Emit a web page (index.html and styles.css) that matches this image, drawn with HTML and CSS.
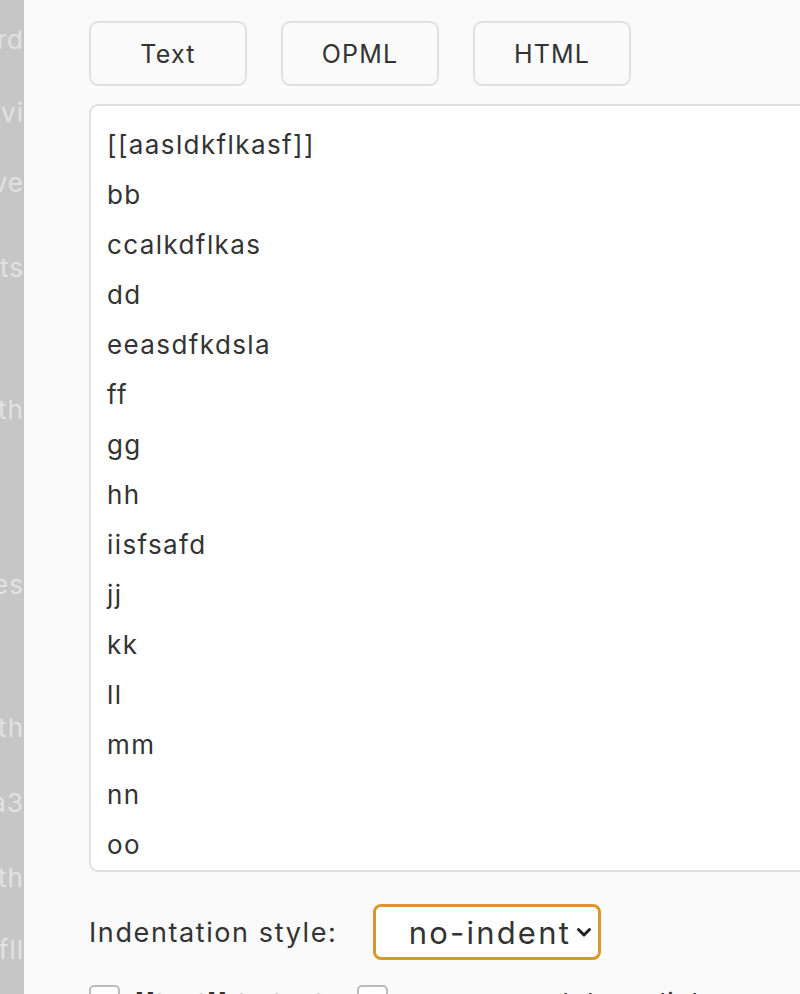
FILE: index.html
```html
<!DOCTYPE html>
<html>
<head>
<meta charset="utf-8">
<link rel="stylesheet" href="styles.css">
</head>
<body>
<div class="page">
  <aside class="sidebar">
    <div class="side-item s1">Dashboard</div>
    <div class="side-item s2">Overvi</div>
    <div class="side-item s3">Archive</div>
    <div class="side-item s4">Results</div>
    <div class="side-item s5">Month</div>
    <div class="side-item s6">Notes</div>
    <div class="side-item s7">12th</div>
    <div class="side-item s8">fa3</div>
    <div class="side-item s9">20th</div>
    <div class="side-item s10">asdfll</div>
  </aside>
  <main class="main">
    <div class="tabs">
      <button class="tab">Text</button>
      <button class="tab">OPML</button>
      <button class="tab">HTML</button>
    </div>
    <div class="output">
      <div class="line">[[aasldkflkasf]]</div>
      <div class="line">bb</div>
      <div class="line">ccalkdflkas</div>
      <div class="line">dd</div>
      <div class="line">eeasdfkdsla</div>
      <div class="line">ff</div>
      <div class="line">gg</div>
      <div class="line">hh</div>
      <div class="line">iisfsafd</div>
      <div class="line">jj</div>
      <div class="line">kk</div>
      <div class="line">ll</div>
      <div class="line">mm</div>
      <div class="line">nn</div>
      <div class="line">oo</div>
    </div>
    <div class="indent-row">
      <label class="indent-label">Indentation style:</label>
      <div class="select">
        <span class="select-value">no-indent</span>
        <svg class="chevron" width="16" height="12" viewBox="0 0 16 12"><path d="M2.5 3.5 L8 9 L13.5 3.5" fill="none" stroke="#222" stroke-width="3" stroke-linecap="round" stroke-linejoin="round"/></svg>
      </div>
    </div>
    <div class="options">
      <label class="option"><span class="checkbox"></span><span class="opt-text">[[text]] to text</span></label>
      <label class="option"><span class="checkbox"></span><span class="opt-text">remove markdown links</span></label>
    </div>
  </main>
</div>
</body>
</html>
```

FILE: styles.css
```css
html, body {
  margin: 0;
  padding: 0;
  height: 994px;
  overflow: hidden;
  background: #fafafa;
  font-family: Inter, "Noto Sans", sans-serif;
  color: #333;
}
.page {
  display: flex;
  height: 994px;
}
.sidebar {
  width: 24px;
  flex: none;
  background: #c6c6c6;
  overflow: hidden;
  display: flex;
  flex-direction: column;
  align-items: flex-end;
}
.side-item {
  color: #e2e2e2;
  font-size: 26px;
  line-height: 30px;
  white-space: nowrap;
  letter-spacing: 1px;
}
.s1 { margin-top: 25px; }
.s2 { margin-top: 43px; }
.s3 { margin-top: 40px; }
.s4 { margin-top: 55px; }
.s5 { margin-top: 112px; }
.s6 { margin-top: 145px; }
.s7 { margin-top: 113px; }
.s8 { margin-top: 45px; }
.s9 { margin-top: 45px; }
.s10 { margin-top: 42px; }
.main {
  flex: 1;
  padding: 21px 0 0 65px;
  min-width: 0;
}
.tabs {
  display: flex;
  gap: 34px;
}
.tab {
  width: 158px;
  height: 65px;
  border: 2px solid #e0e0e0;
  border-radius: 9px;
  background: #fafafa;
  font-family: Inter, "Noto Sans", sans-serif;
  font-size: 25px;
  letter-spacing: 1.2px;
  color: #333;
  padding: 0;
}
.output {
  margin-top: 18px;
  width: 760px;
  height: 768px;
  box-sizing: border-box;
  border: 2px solid #e0e0e0;
  border-radius: 9px;
  background: #fff;
  padding: 14px 16px;
}
.line {
  font-size: 26px;
  line-height: 50px;
  letter-spacing: 1.4px;
  color: #333;
}
.indent-row {
  margin-top: 32px;
  display: flex;
  align-items: center;
  gap: 35px;
}
.indent-label {
  font-size: 27px;
  letter-spacing: 1.6px;
  color: #333;
  width: 249px;
  white-space: nowrap;
}
.select {
  width: 228px;
  height: 56px;
  box-sizing: border-box;
  border: 3px solid #d9982f;
  border-radius: 8px;
  background: #fff;
  display: flex;
  align-items: center;
  justify-content: flex-end;
  padding-right: 6px;
  gap: 5px;
}
.select-value {
  font-size: 31px;
  letter-spacing: 2.2px;
  color: #333;
}
.chevron {
  display: block;
}
.options {
  margin-top: 25px;
  display: flex;
  gap: 32px;
}
.option {
  display: flex;
  align-items: flex-start;
  gap: 14px;
}
.checkbox {
  width: 27px;
  height: 27px;
  border: 2px solid #bbb;
  border-radius: 5px;
  background: #fff;
}
.opt-text {
  font-size: 26px;
  line-height: 30px;
  letter-spacing: 1.4px;
  color: #333;
  margin-top: 3px;
}
```
